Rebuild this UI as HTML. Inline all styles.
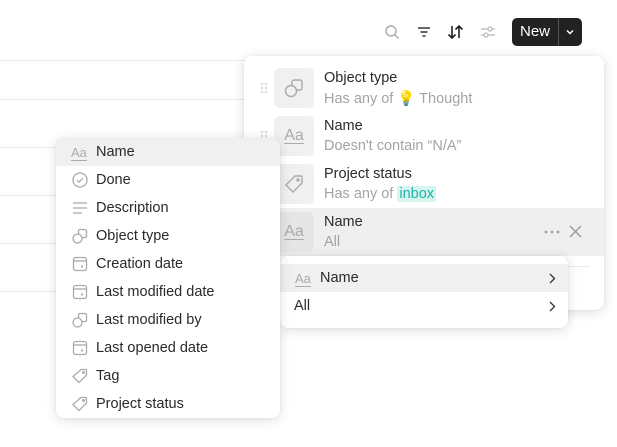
<!DOCTYPE html>
<html><head><meta charset="utf-8"><style>
*{box-sizing:border-box;margin:0;padding:0}
body{width:617px;height:447px;overflow:hidden;background:#fff;font-family:"Liberation Sans",Arial,sans-serif;font-size:14.5px;color:#2a2a2a;position:relative}
.hl{position:absolute;left:0;width:250px;height:1px;background:#e8e8e8}
.panel{position:absolute;background:#fff;border-radius:8px;box-shadow:0 2px 12px rgba(0,0,0,.14),0 0 1px rgba(0,0,0,.12)}
.row{position:absolute;left:0;right:0}
.ibox{position:absolute;left:30px;width:40px;height:40px;border-radius:6px;background:#f0f0f0;display:flex;align-items:center;justify-content:center}
.t1{position:absolute;left:80px;color:#2a2a2a}
.t2{position:absolute;left:80px;color:#a3a3a3}
.drag{position:absolute;left:16px;width:8px;height:12px}
.aa{font-size:15px;color:#aaa;text-decoration:underline;text-underline-offset:3px;text-decoration-thickness:1px}
.mi{position:absolute;left:0;right:0;height:28px;display:flex;align-items:center;padding-left:15px}
.mi svg,.mi .aa{width:18px;margin-right:7px;flex:none}
.mi .aa{font-size:13px}
</style></head><body>
<div class="hl" style="top:60px"></div>
<div class="hl" style="top:99px"></div>
<div class="hl" style="top:147px"></div>
<div class="hl" style="top:195px"></div>
<div class="hl" style="top:243px"></div>
<div class="hl" style="top:291px"></div>

<svg style="position:absolute;left:384px;top:24px" width="16" height="16" viewBox="0 0 16 16" fill="none" stroke="#aaa" stroke-width="1.4"><circle cx="7" cy="7" r="5"/><path d="M11 11l3.5 3.5"/></svg>
<svg style="position:absolute;left:416px;top:24px" width="16" height="16" viewBox="0 0 16 16" fill="none" stroke="#333" stroke-width="1.6"><path d="M2 4h12M4.5 8h7M6.5 12h3"/></svg>
<svg style="position:absolute;left:447px;top:24px" width="17" height="16" viewBox="0 0 17 16" fill="none" stroke="#222" stroke-width="1.6"><path d="M5 2v12M1.5 10.5L5 14l3.5-3.5M12 14V2M8.5 5.5L12 2l3.5 3.5"/></svg>
<svg style="position:absolute;left:480px;top:24px" width="16" height="16" viewBox="0 0 16 16" fill="none" stroke="#bbb" stroke-width="1.3"><path d="M1 5h14M1 11h14"/><circle cx="10" cy="5" r="2" fill="#fff"/><circle cx="6" cy="11" r="2" fill="#fff"/></svg>
<div style="position:absolute;left:512px;top:18px;width:70px;height:28px;background:#222;border-radius:5px;color:#fff">
<span style="position:absolute;left:8px;top:5px;font-size:15px">New</span>
<div style="position:absolute;left:46px;top:0;width:1px;height:28px;background:#555"></div>
<svg style="position:absolute;left:53px;top:10px" width="10" height="8" viewBox="0 0 10 8" fill="none" stroke="#fff" stroke-width="1.5"><path d="M2 2.5l3 3 3-3"/></svg>
</div>

<div class="panel" style="left:244px;top:56px;width:360px;height:254px">
 <div class="row" style="top:10px;height:48px">
  <svg class="drag" style="top:16px" viewBox="0 0 8 12" fill="#c8c8c8"><circle cx="2" cy="2" r="1"/><circle cx="6" cy="2" r="1"/><circle cx="2" cy="6" r="1"/><circle cx="6" cy="6" r="1"/><circle cx="2" cy="10" r="1"/><circle cx="6" cy="10" r="1"/></svg>
  <div class="ibox" style="top:2px"><svg width="22" height="22" viewBox="0 0 22 22" fill="none" stroke="#aaa" stroke-width="1.4"><circle cx="8" cy="14" r="5.5"/><path d="M9 8.5V5a2 2 0 0 1 2-2h6a2 2 0 0 1 2 2v6a2 2 0 0 1-2 2h-3.5"/></svg></div>
  <div class="t1" style="top:4px">Object type</div>
  <div class="t2" style="top:24px">Has any of <span style="color:#f3c640">💡</span> Thought</div>
 </div>
 <div class="row" style="top:58px;height:48px">
  <svg class="drag" style="top:16px" viewBox="0 0 8 12" fill="#c8c8c8"><circle cx="2" cy="2" r="1"/><circle cx="6" cy="2" r="1"/><circle cx="2" cy="6" r="1"/><circle cx="6" cy="6" r="1"/></svg>
  <div class="ibox" style="top:2px"><span class="aa" style="font-size:16px">Aa</span></div>
  <div class="t1" style="top:4px">Name</div>
  <div class="t2" style="top:24px">Doesn't contain “N/A”</div>
 </div>
 <div class="row" style="top:106px;height:48px">
  <div class="ibox" style="top:2px"><svg width="22" height="22" viewBox="0 0 22 22" fill="none" stroke="#aaa" stroke-width="1.4"><path d="M12 3h6a1 1 0 0 1 1 1v6l-9 9-7-7z"/><circle cx="15" cy="7" r="1"/></svg></div>
  <div class="t1" style="top:4px">Project status</div>
  <div class="t2" style="top:24px">Has any of <span style="background:#d6f5f1;color:#1fb3a5;padding:0 2px;border-radius:2px">inbox</span></div>
 </div>
 <div class="row" style="top:152px;height:48px;background:#efefef">
  <div class="ibox" style="top:4px;background:#e6e6e6"><span class="aa" style="font-size:16px">Aa</span></div>
  <div class="t1" style="top:6px">Name</div>
  <div class="t2" style="top:26px">All</div>
  <svg style="position:absolute;left:300px;top:22px" width="16" height="4" viewBox="0 0 16 4" fill="#999"><circle cx="2" cy="2" r="1.3"/><circle cx="8" cy="2" r="1.3"/><circle cx="14" cy="2" r="1.3"/></svg>
  <svg style="position:absolute;left:325px;top:17px" width="13" height="13" viewBox="0 0 13 13" stroke="#999" stroke-width="1.4"><path d="M1 1l11 11M12 1L1 12"/></svg>
 </div>
 <div style="position:absolute;left:40px;top:210px;width:306px;height:1px;background:#e8e8e8"></div>
</div>

<div class="panel" style="left:280px;top:256px;width:288px;height:72px">
 <div class="mi" style="top:8px;background:#f0f0f0"><span class="aa">Aa</span><span>Name</span></div>
 <div class="mi" style="top:36px;padding-left:14px"><span>All</span></div>
 <svg style="position:absolute;left:268px;top:17px" width="8" height="11" viewBox="0 0 8 11" fill="none" stroke="#333" stroke-width="1.3"><path d="M2 1l4.5 4.5L2 10"/></svg>
 <svg style="position:absolute;left:268px;top:45px" width="8" height="11" viewBox="0 0 8 11" fill="none" stroke="#333" stroke-width="1.3"><path d="M2 1l4.5 4.5L2 10"/></svg>
</div>

<div class="panel" style="left:56px;top:138px;width:224px;height:280px">
 <div class="mi" style="top:0;background:#f0f0f0;border-radius:8px 8px 0 0"><span class="aa">Aa</span><span>Name</span></div>
 <div class="mi" style="top:28px"><svg height="18" viewBox="0 0 18 18" fill="none" stroke="#aaa" stroke-width="1.3"><circle cx="9" cy="9" r="7"/><path d="M6 9.2l2 2 4-4"/></svg><span>Done</span></div>
 <div class="mi" style="top:56px"><svg height="18" viewBox="0 0 18 18" fill="none" stroke="#aaa" stroke-width="1.3"><path d="M2 4h14M2 9h14M2 14h9"/></svg><span>Description</span></div>
 <div class="mi" style="top:84px"><svg height="18" viewBox="0 0 18 18" fill="none" stroke="#aaa" stroke-width="1.3"><circle cx="6.5" cy="11.5" r="4.5"/><path d="M7.5 7V4a1.5 1.5 0 0 1 1.5-1.5h5A1.5 1.5 0 0 1 15.5 4v5a1.5 1.5 0 0 1-1.5 1.5h-3"/></svg><span>Object type</span></div>
 <div class="mi" style="top:112px"><svg height="18" viewBox="0 0 18 18" fill="none" stroke="#aaa" stroke-width="1.3"><rect x="2.5" y="2.5" width="13" height="13" rx="2"/><path d="M2.5 6h13"/><rect x="10" y="10.5" width="2" height="2" fill="#aaa" stroke="none"/></svg><span>Creation date</span></div>
 <div class="mi" style="top:140px"><svg height="18" viewBox="0 0 18 18" fill="none" stroke="#aaa" stroke-width="1.3"><rect x="2.5" y="2.5" width="13" height="13" rx="2"/><path d="M2.5 6h13"/><rect x="10" y="10.5" width="2" height="2" fill="#aaa" stroke="none"/></svg><span>Last modified date</span></div>
 <div class="mi" style="top:168px"><svg height="18" viewBox="0 0 18 18" fill="none" stroke="#aaa" stroke-width="1.3"><circle cx="6.5" cy="11.5" r="4.5"/><path d="M7.5 7V4a1.5 1.5 0 0 1 1.5-1.5h5A1.5 1.5 0 0 1 15.5 4v5a1.5 1.5 0 0 1-1.5 1.5h-3"/></svg><span>Last modified by</span></div>
 <div class="mi" style="top:196px"><svg height="18" viewBox="0 0 18 18" fill="none" stroke="#aaa" stroke-width="1.3"><rect x="2.5" y="2.5" width="13" height="13" rx="2"/><path d="M2.5 6h13"/><rect x="10" y="10.5" width="2" height="2" fill="#aaa" stroke="none"/></svg><span>Last opened date</span></div>
 <div class="mi" style="top:224px"><svg height="18" viewBox="0 0 18 18" fill="none" stroke="#aaa" stroke-width="1.3"><path d="M10 2.5h5a.5.5 0 0 1 .5.5v5l-7.5 7.5-6-6z"/><circle cx="12.5" cy="5.5" r=".8"/></svg><span>Tag</span></div>
 <div class="mi" style="top:252px"><svg height="18" viewBox="0 0 18 18" fill="none" stroke="#aaa" stroke-width="1.3"><path d="M10 2.5h5a.5.5 0 0 1 .5.5v5l-7.5 7.5-6-6z"/><circle cx="12.5" cy="5.5" r=".8"/></svg><span>Project status</span></div>
</div>
</body></html>
